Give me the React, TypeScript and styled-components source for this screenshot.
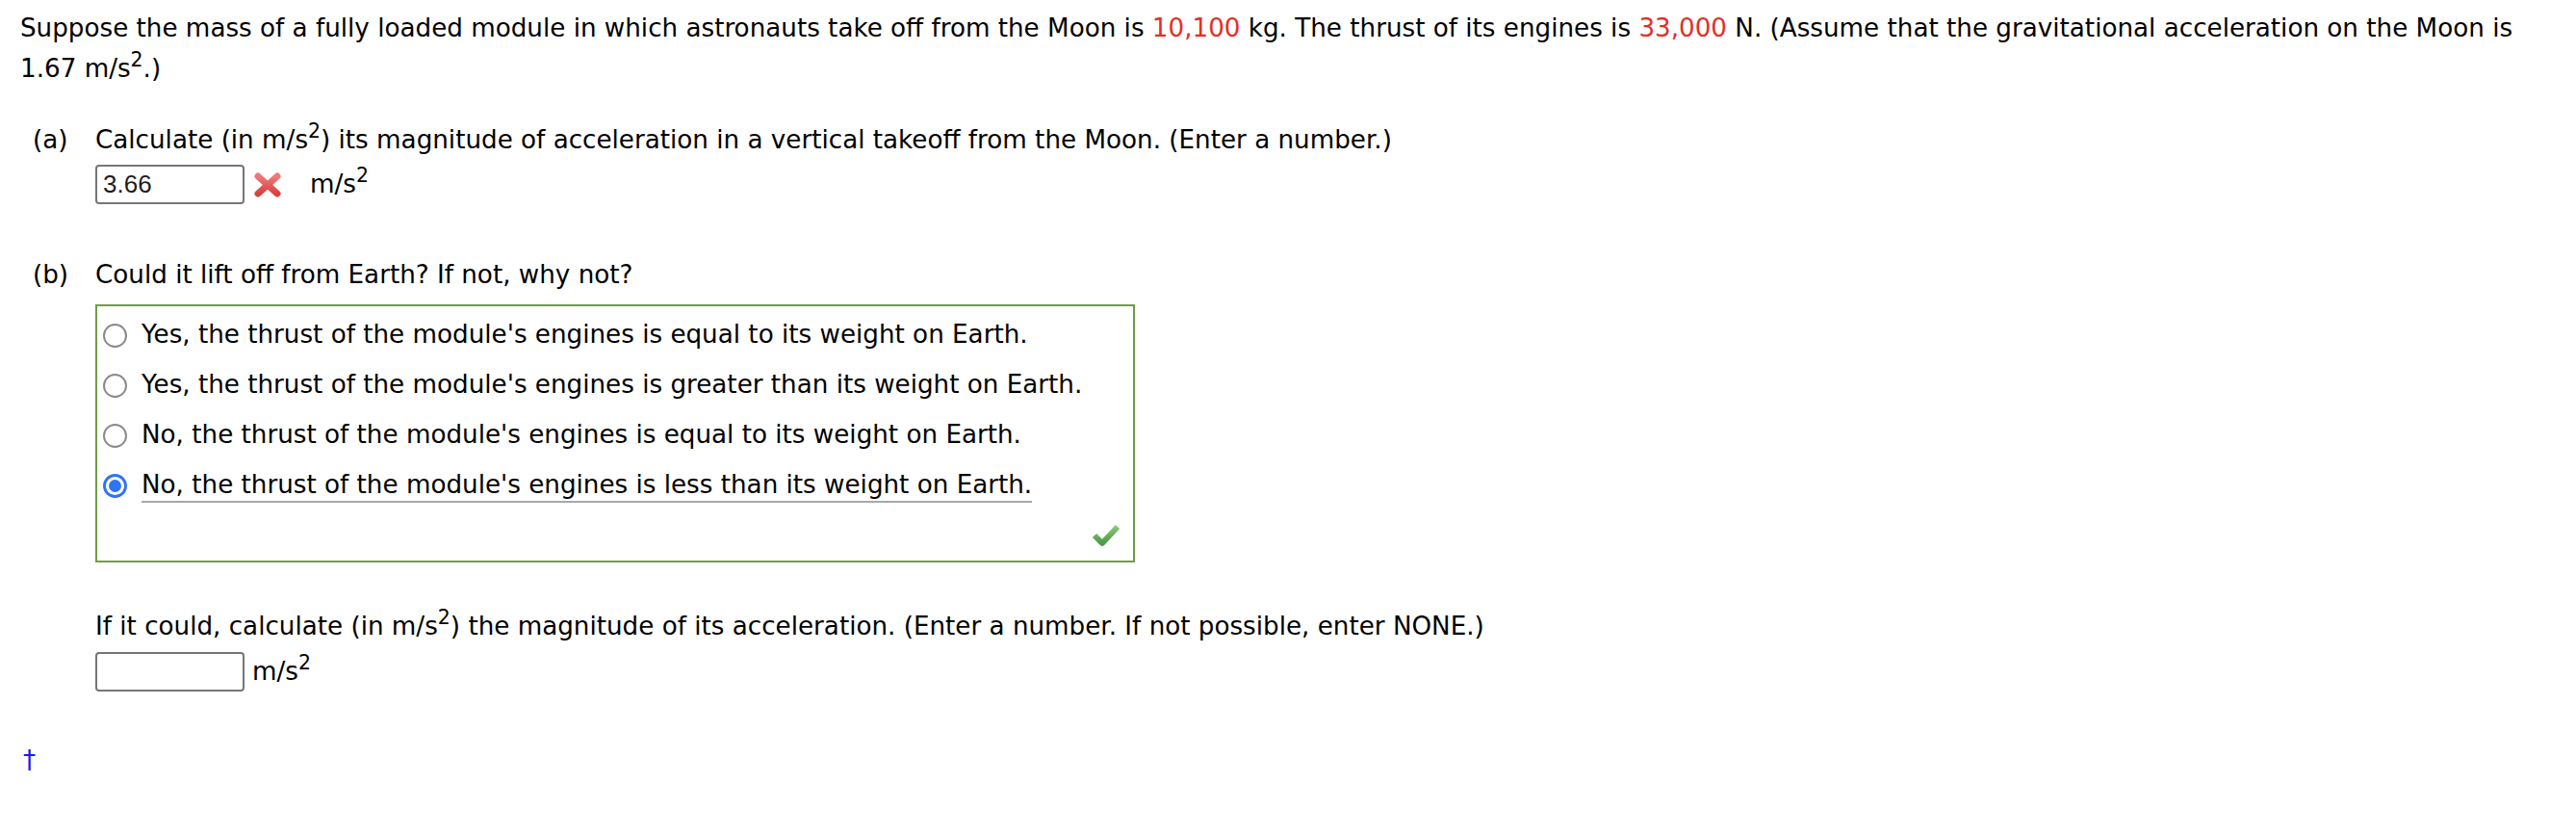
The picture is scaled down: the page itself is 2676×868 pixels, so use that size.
import React from "react";
import styled, { createGlobalStyle } from "styled-components";

const GlobalStyle = createGlobalStyle`
  body {
    margin: 0;
    background: #ffffff;
    color: #000000;
    font-family: "DejaVu Sans", Verdana, sans-serif;
    font-size: 26.2px;
  }
`;

const Page = styled.div`
  padding: 8px 21px 40px 21px;
`;

const Intro = styled.p`
  margin: 0;
  max-width: 2600px;
  line-height: 42px;
`;

const Red = styled.span`
  color: #e62e25;
`;

const Sup = styled.sup`
  font-size: 0.78em;
  line-height: 1;
  vertical-align: 0.56em;
`;

const Part = styled.div<{ top: number }>`
  display: flex;
  margin-top: ${(p) => p.top}px;
`;

const Label = styled.div`
  width: 78px;
  padding-left: 13px;
  box-sizing: border-box;
  line-height: 42px;
`;

const Body = styled.div`
  display: flex;
  flex-direction: column;
  align-items: flex-start;
`;

const Prompt = styled.div<{ top?: number }>`
  line-height: 42px;
  margin-top: ${(p) => p.top ?? 0}px;
`;

const AnswerRow = styled.div<{ top: number }>`
  display: flex;
  align-items: center;
  margin-top: ${(p) => p.top}px;
`;

const Input = styled.div`
  width: 155px;
  height: 41px;
  box-sizing: border-box;
  border: 2px solid #767676;
  border-radius: 4px;
  padding-left: 6px;
  display: flex;
  align-items: center;
  font-family: "Liberation Sans", Arial, sans-serif;
  font-size: 26px;
  color: #1e1e1e;
`;

const Unit = styled.span<{ left: number }>`
  margin-left: ${(p) => p.left}px;
  line-height: 41px;
`;

const IconWrap = styled.span`
  display: flex;
  margin-left: 9px;
`;

const Choices = styled.div`
  margin-top: 10px;
  width: 1080px;
  box-sizing: border-box;
  border: 2px solid #6c9e44;
  padding: 4px 12px 14px 6px;
  display: flex;
  flex-direction: column;
`;

const Choice = styled.label`
  display: flex;
  align-items: center;
  height: 52px;
`;

const Radio = styled.span<{ checked?: boolean }>`
  position: relative;
  width: 25px;
  height: 25px;
  box-sizing: border-box;
  border-radius: 50%;
  border: ${(p) => (p.checked ? "3px solid #2f74f4" : "2px solid #8a8a8a")};
  background: #ffffff;
  margin-right: 15px;
  flex-shrink: 0;

  &::after {
    content: "";
    display: ${(p) => (p.checked ? "block" : "none")};
    position: absolute;
    inset: 3px;
    border-radius: 50%;
    background: #2f74f4;
  }
`;

const ChoiceText = styled.span<{ selected?: boolean }>`
  line-height: 34px;
  border-bottom: 2px solid ${(p) => (p.selected ? "#a8a8a8" : "transparent")};
`;

const CheckRow = styled.div`
  display: flex;
  justify-content: flex-end;
  align-items: flex-end;
  height: 38px;
`;

const Dagger = styled.div`
  margin-top: 50px;
  padding-left: 3px;
  color: #1a1aee;
  line-height: 42px;
`;

const options = [
  "Yes, the thrust of the module's engines is equal to its weight on Earth.",
  "Yes, the thrust of the module's engines is greater than its weight on Earth.",
  "No, the thrust of the module's engines is equal to its weight on Earth.",
  "No, the thrust of the module's engines is less than its weight on Earth.",
];

const WrongIcon = () => (
  <svg width="30" height="28" viewBox="0 0 30 28">
    <defs>
      <linearGradient id="xg" x1="0" y1="0" x2="0" y2="1">
        <stop offset="0" stopColor="#f07a7a" />
        <stop offset="1" stopColor="#d9403f" />
      </linearGradient>
    </defs>
    <path d="M5 5 L25 23 M25 5 L5 23" stroke="url(#xg)" strokeWidth="7" strokeLinecap="round" fill="none" />
  </svg>
);

const CheckIcon = () => (
  <svg width="32" height="26" viewBox="0 0 32 26">
    <defs>
      <linearGradient id="cg" x1="0" y1="0" x2="0" y2="1">
        <stop offset="0" stopColor="#86c777" />
        <stop offset="1" stopColor="#4f9a46" />
      </linearGradient>
    </defs>
    <path d="M4 14 L12 22 L28 5" stroke="url(#cg)" strokeWidth="6" strokeLinejoin="round" fill="none" />
  </svg>
);

export default function App() {
  return (
    <>
      <GlobalStyle />
      <Page>
        <Intro>
          Suppose the mass of a fully loaded module in which astronauts take off from the Moon is{" "}
          <Red>10,100</Red> kg. The thrust of its engines is <Red>33,000</Red> N. (Assume that the
          gravitational acceleration on the Moon is 1.67 m/s<Sup>2</Sup>.)
        </Intro>

        <Part top={32}>
          <Label>(a)</Label>
          <Body>
            <Prompt>
              Calculate (in m/s<Sup>2</Sup>) its magnitude of acceleration in a vertical takeoff from
              the Moon. (Enter a number.)
            </Prompt>
            <AnswerRow top={5}>
              <Input>3.66</Input>
              <IconWrap>
                <WrongIcon />
              </IconWrap>
              <Unit left={29}>
                m/s<Sup>2</Sup>
              </Unit>
            </AnswerRow>
          </Body>
        </Part>

        <Part top={52}>
          <Label>(b)</Label>
          <Body>
            <Prompt>Could it lift off from Earth? If not, why not?</Prompt>
            <Choices>
              {options.map((o, i) => (
                <Choice key={i}>
                  <Radio checked={i === 3} />
                  <ChoiceText selected={i === 3}>{o}</ChoiceText>
                </Choice>
              ))}
              <CheckRow>
                <CheckIcon />
              </CheckRow>
            </Choices>
            <Prompt top={45}>
              If it could, calculate (in m/s<Sup>2</Sup>) the magnitude of its acceleration. (Enter a
              number. If not possible, enter NONE.)
            </Prompt>
            <AnswerRow top={6}>
              <Input />
              <Unit left={8}>
                m/s<Sup>2</Sup>
              </Unit>
            </AnswerRow>
          </Body>
        </Part>

        <Dagger>†</Dagger>
      </Page>
    </>
  );
}
